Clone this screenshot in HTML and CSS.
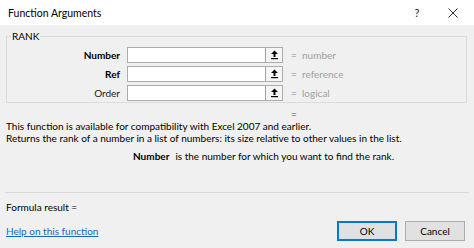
FILE: index.html
```html
<!DOCTYPE html>
<html>
<head>
<meta charset="utf-8">
<link rel="stylesheet" href="styles.css">
</head>
<body>
<div class="dialog">
  <div class="titlebar">
    <span class="title">Function Arguments</span>
    <div class="controls">
      <span class="tbtn help">?</span>
      <span class="tbtn close"><svg width="10" height="10" viewBox="0 0 10 10"><path d="M0.5 0.5 L9.5 9.5 M9.5 0.5 L0.5 9.5" stroke="#333" stroke-width="1" fill="none"/></svg></span>
    </div>
  </div>
  <div class="content">
    <fieldset class="group">
      <legend>RANK</legend>
      <div class="arg">
        <span class="label strong">Number</span>
        <span class="field"><span class="input"></span><span class="collapse"><svg width="9" height="10" viewBox="0 0 9 10"><path d="M4.5 0.5 L8 4 L5.5 4 L5.5 7 L3.5 7 L3.5 4 L1 4 Z" fill="#000"/><rect x="1" y="8" width="7" height="1.2" fill="#000"/></svg></span></span>
        <span class="eq">=</span>
        <span class="val">number</span>
      </div>
      <div class="arg">
        <span class="label strong">Ref</span>
        <span class="field"><span class="input"></span><span class="collapse"><svg width="9" height="10" viewBox="0 0 9 10"><path d="M4.5 0.5 L8 4 L5.5 4 L5.5 7 L3.5 7 L3.5 4 L1 4 Z" fill="#000"/><rect x="1" y="8" width="7" height="1.2" fill="#000"/></svg></span></span>
        <span class="eq">=</span>
        <span class="val">reference</span>
      </div>
      <div class="arg">
        <span class="label">Order</span>
        <span class="field"><span class="input"></span><span class="collapse"><svg width="9" height="10" viewBox="0 0 9 10"><path d="M4.5 0.5 L8 4 L5.5 4 L5.5 7 L3.5 7 L3.5 4 L1 4 Z" fill="#000"/><rect x="1" y="8" width="7" height="1.2" fill="#000"/></svg></span></span>
        <span class="eq">=</span>
        <span class="val">logical</span>
      </div>
    </fieldset>
    <div class="result-eq">=</div>
    <p class="desc">This function is available for compatibility with Excel 2007 and earlier.<br>Returns the rank of a number in a list of numbers: its size relative to other values in the list.</p>
    <p class="argdesc"><span class="argname">Number</span>is the number for which you want to find the rank.</p>
    <div class="sep"></div>
    <div class="formula">Formula result =</div>
    <div class="footer">
      <a class="helplink" href="#">Help on this function</a>
      <div class="buttons">
        <button class="btn default">OK</button>
        <button class="btn">Cancel</button>
      </div>
    </div>
  </div>
</div>
</body>
</html>
```
FILE: styles.css
```css
html, body {
  margin: 0;
  padding: 0;
}
body {
  width: 474px;
  height: 248px;
  overflow: hidden;
  font-family: "Lato", "Noto Sans", sans-serif;
  font-size: 10px;
  color: #000;
  background: #f0f0f0;
}
.dialog {
  display: flex;
  flex-direction: column;
  height: 248px;
}
.titlebar {
  height: 25px;
  background: #fff;
  display: flex;
  align-items: center;
  justify-content: space-between;
  padding: 0 2px 0 8px;
  flex-shrink: 0;
}
.title {
  font-size: 10.5px;
  color: #000;
}
.controls {
  display: flex;
  height: 25px;
}
.tbtn {
  height: 25px;
  display: flex;
  align-items: center;
  justify-content: center;
  color: #222;
}
.help {
  width: 34px;
  font-size: 11px;
}
.close {
  width: 38px;
}
.content {
  flex: 1;
  background: #f0f0f0;
  display: flex;
  flex-direction: column;
}
.group {
  margin: 3px 7px 0 6px;
  padding: 3px 0 1px 0;
  border: 1px solid #dcdcdc;
  display: flex;
  flex-direction: column;
  gap: 3px;
}
.group legend {
  padding: 0 1px;
  margin-left: 4px;
  font-size: 10px;
  line-height: 16px;
}
.arg {
  display: flex;
  align-items: center;
  height: 16px;
}
.label {
  width: 113px;
  text-align: right;
  padding-right: 7px;
  box-sizing: content-box;
  line-height: 16px;
  color: #222;
}
.strong {
  font-weight: bold;
  color: #000;
}
.field {
  display: flex;
  width: 156px;
  height: 16px;
  box-sizing: border-box;
  border: 1px solid #acacac;
  background: #fff;
}
.input {
  flex: 1;
}
.collapse {
  width: 17px;
  height: 14px;
  box-sizing: border-box;
  border-left: 1px solid #a0a0a0;
  background: #f5f5f5;
  display: flex;
  align-items: center;
  justify-content: center;
}
.eq {
  margin-left: 8px;
  width: 11px;
  color: #8c8c8c;
}
.val {
  color: #a0a0a0;
}
.result-eq {
  margin: 5px 0 0 291px;
  line-height: 12px;
  color: #555;
}
.desc {
  margin: 0 0 0 6px;
  line-height: 12px;
}
.argdesc {
  margin: 5px 0 0 0;
  line-height: 14px;
}
.argname {
  display: inline-block;
  margin-left: 133px;
  margin-right: 6px;
  font-weight: bold;
}
.sep {
  margin: 29px 5px 0 5px;
  height: 1px;
  background: #dadada;
  flex-shrink: 0;
}
.formula {
  margin: 6px 0 0 6px;
  line-height: 16px;
}
.footer {
  display: flex;
  align-items: center;
  justify-content: space-between;
  margin: 6px 9px 0 6px;
}
.helplink {
  color: #1a66c4;
  text-decoration: underline;
}
.buttons {
  display: flex;
  gap: 8px;
}
.btn {
  width: 60px;
  height: 20px;
  font-family: inherit;
  font-size: 10px;
  background: #e1e1e1;
  border: 1px solid #adadad;
  padding: 0;
  color: #000;
}
.btn.default {
  border: 2px solid #0078d7;
}
```
